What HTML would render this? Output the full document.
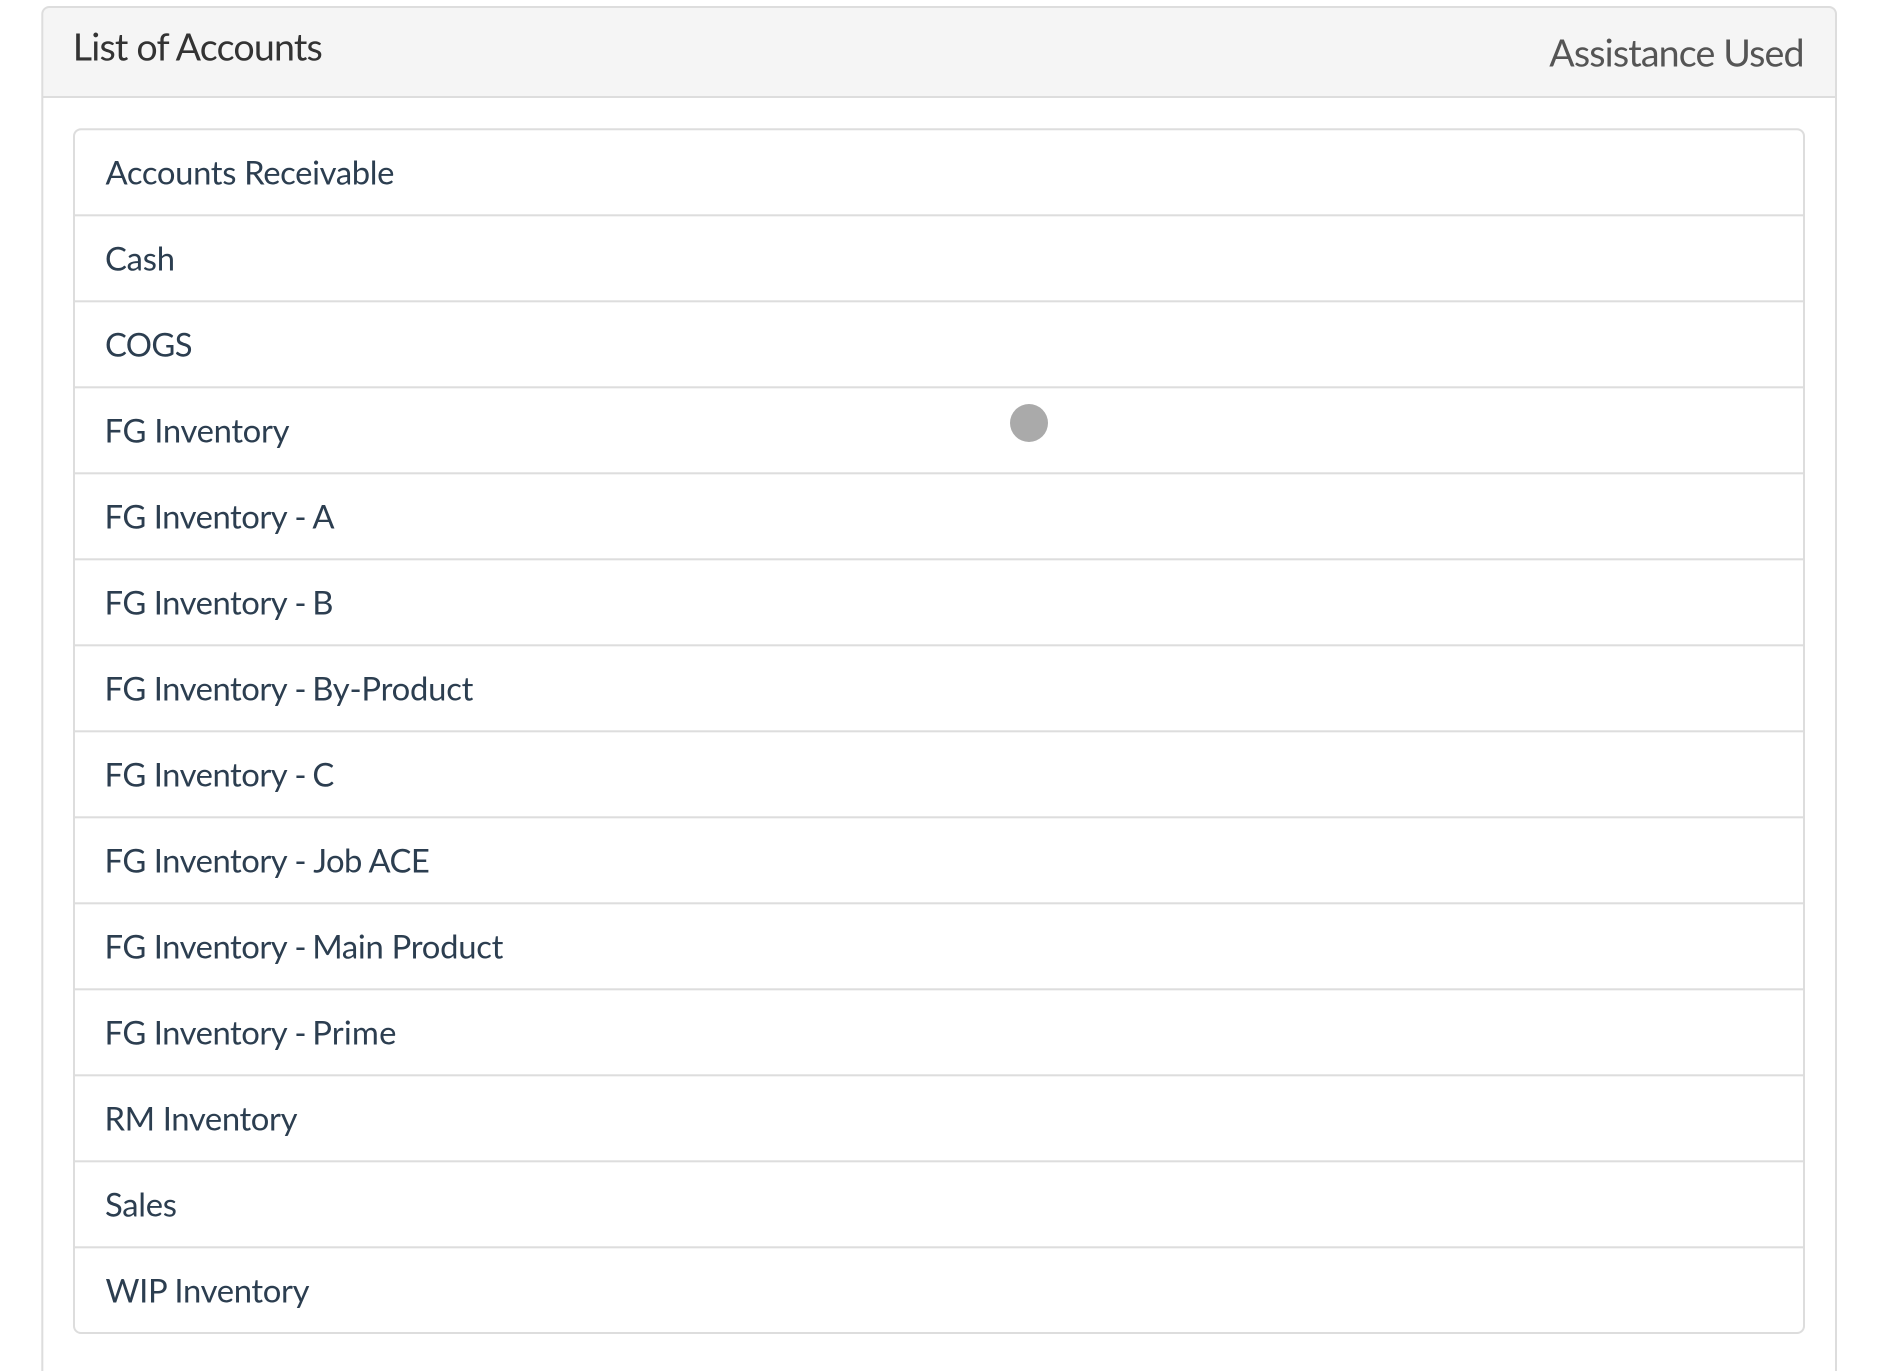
<!DOCTYPE html>
<html>
<head>
<meta charset="utf-8">
<title>List of Accounts</title>
<style>
html,body{margin:0;padding:0;background:#fff;width:1897px;height:1371px;overflow:hidden}
svg{display:block}
text{font-family:"Lato","Carlito","Liberation Sans",sans-serif}
.r{font-size:32.8px;fill:#2c3e50}
</style>
</head>
<body>
<svg width="1897" height="1371" viewBox="0 0 1897 1371" xmlns="http://www.w3.org/2000/svg">
<rect width="1897" height="1371" fill="#fff"/>
<path d="M42.3 1372V14a7 7 0 0 1 7-7H1829a7 7 0 0 1 7 7V97H42.3Z" fill="#f5f5f5"/>
<path d="M42.3 1372V14a7 7 0 0 1 7-7H1829a7 7 0 0 1 7 7V1372" fill="none" stroke="#ddd" stroke-width="2"/>
<rect x="42" y="96" width="1794" height="2" fill="#ddd"/>
<rect x="74" y="129.2" width="1730" height="1203.8" rx="7" fill="#fff" stroke="#ddd" stroke-width="2"/>
<g fill="#ddd">
<rect x="74" y="214.3" width="1730" height="2"/>
<rect x="74" y="300.3" width="1730" height="2"/>
<rect x="74" y="386.3" width="1730" height="2"/>
<rect x="74" y="472.3" width="1730" height="2"/>
<rect x="74" y="558.3" width="1730" height="2"/>
<rect x="74" y="644.3" width="1730" height="2"/>
<rect x="74" y="730.3" width="1730" height="2"/>
<rect x="74" y="816.3" width="1730" height="2"/>
<rect x="74" y="902.3" width="1730" height="2"/>
<rect x="74" y="988.3" width="1730" height="2"/>
<rect x="74" y="1074.3" width="1730" height="2"/>
<rect x="74" y="1160.3" width="1730" height="2"/>
<rect x="74" y="1246.3" width="1730" height="2"/>
</g>
<text x="72.8" y="60.5" font-size="37.6" fill="#333" textLength="250" lengthAdjust="spacing">List of Accounts</text>
<text x="1549.3" y="66.5" font-size="37.6" fill="#555" textLength="255.2" lengthAdjust="spacing">Assistance Used</text>
<text class="r" x="105.5" y="184.5" textLength="289" lengthAdjust="spacing">Accounts Receivable</text>
<text class="r" x="105" y="270.5" textLength="70" lengthAdjust="spacing">Cash</text>
<text class="r" x="105" y="356.5" textLength="87.5" lengthAdjust="spacing">COGS</text>
<text class="r" x="104.5" y="442.5" textLength="185" lengthAdjust="spacing">FG Inventory</text>
<text class="r" x="104.5" y="528.5" textLength="202" lengthAdjust="spacing">FG Inventory -</text><text class="r" x="312.4" y="528.5">A</text>
<text class="r" x="104.5" y="614.5" textLength="202" lengthAdjust="spacing">FG Inventory -</text><text class="r" x="312.2" y="614.5">B</text>
<text class="r" x="104.5" y="700.5" textLength="202" lengthAdjust="spacing">FG Inventory -</text><text class="r" x="312.2" y="700.5" textLength="161.2" lengthAdjust="spacing">By-Product</text>
<text class="r" x="104.5" y="786.5" textLength="202" lengthAdjust="spacing">FG Inventory -</text><text class="r" x="312.4" y="786.5">C</text>
<text class="r" x="104.5" y="872.5" textLength="202" lengthAdjust="spacing">FG Inventory -</text><text class="r" x="313.3" y="872.5" textLength="116.5" lengthAdjust="spacing">Job ACE</text>
<text class="r" x="104.5" y="958.5" textLength="202" lengthAdjust="spacing">FG Inventory -</text><text class="r" x="312.2" y="958.5" textLength="191.2" lengthAdjust="spacing">Main Product</text>
<text class="r" x="104.5" y="1044.5" textLength="202" lengthAdjust="spacing">FG Inventory -</text><text class="r" x="312.2" y="1044.5" textLength="84.2" lengthAdjust="spacing">Prime</text>
<text class="r" x="104.5" y="1130.5" textLength="193" lengthAdjust="spacing">RM Inventory</text>
<text class="r" x="105" y="1216.5" textLength="72" lengthAdjust="spacing">Sales</text>
<text class="r" x="105.5" y="1302.5" textLength="204" lengthAdjust="spacing">WIP Inventory</text>
<circle cx="1029" cy="423" r="19" fill="#aaa"/>
</svg>
</body>
</html>
